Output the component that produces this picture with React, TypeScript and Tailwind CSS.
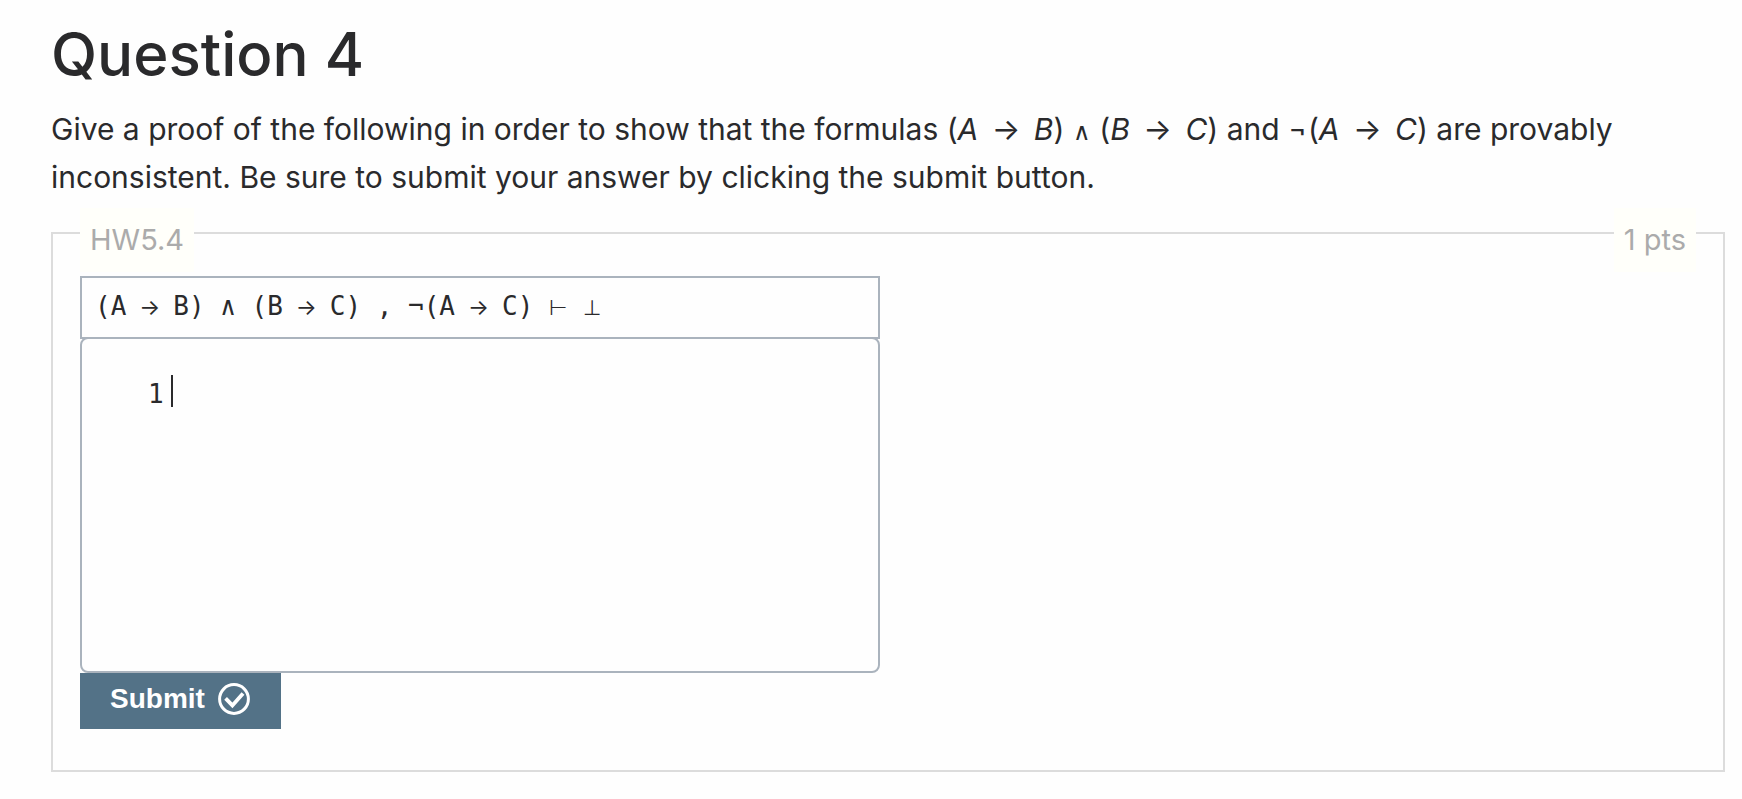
import React from "react";

function CheckCircle() {
  return (
    <svg viewBox="0 0 32 32" className="size-8" fill="none" stroke="currentColor" aria-hidden="true">
      <circle cx="16" cy="16" r="14.4" strokeWidth="3" />
      <path d="M7.6 15.4 L14.4 22.4 L25 10.4" strokeWidth="3.8" />
    </svg>
  );
}

function Arrow() {
  return <span className="px-[5px]">→</span>;
}

function MonoArrow() {
  return (
    <span className="inline-block w-[3ch] text-center leading-none">
      <span className="font-['Inter',sans-serif] text-[22px] leading-none">→</span>
    </span>
  );
}

function Turnstile({ children }: { children: string }) {
  return <span className="font-['DejaVu_Sans',sans-serif] text-[21px] leading-none font-extralight">{children}</span>;
}

export default function App() {
  return (
    <main className="min-h-screen bg-[#fefefe] pt-[18px] pr-[17px] pb-7 pl-[51px] font-['Inter',sans-serif] text-[#2a2a2c]">
      <h1 className="text-[60px] leading-[72px] font-medium">Question 4</h1>
      <p className="mt-[15px] pr-10 text-[30px] leading-[48px]">
        Give a proof of the following in order to show that the formulas (<i>A</i> <Arrow /> <i>B</i>){" "}
        <span className="text-[24px] leading-none font-light">∧</span> (<i>B</i> <Arrow /> <i>C</i>) and ¬(<i>A</i> <Arrow />{" "}
        <i>C</i>) <span>are provably</span>{" "}
        <span>inconsistent. Be sure to submit your answer by clicking the submit button.</span>
      </p>
      <section className="relative mt-[31px] border-2 border-[#dcdcdc] px-[27px] pt-[42px] pb-[41px]">
        <h2 className="absolute -top-[26px] left-[27px] bg-[#fffffa] px-[10px] text-[29px] leading-[64px] text-[#ababab]">
          HW5.4
        </h2>
        <span className="absolute -top-[26px] right-[27px] bg-[#fffffa] px-[10px] text-[29px] leading-[64px] text-[#ababab]">
          1 pts
        </span>
        <form className="max-w-[800px]" onSubmit={(e) => e.preventDefault()}>
          <label
            htmlFor="proof"
            className="block h-[63px] border-2 border-[#aab3bd] px-[13px] font-['DejaVu_Sans_Mono',monospace] text-[26px] leading-[56px] whitespace-pre"
          >
            (A<MonoArrow />B) ∧ (B<MonoArrow />C) , ¬(A<MonoArrow />C) <Turnstile>⊢</Turnstile> <Turnstile>⊥</Turnstile>
          </label>
          <div className="-mt-0.5 flex h-[336px] rounded-lg border-2 border-[#aab3bd] pt-9 pl-[66px] font-['DejaVu_Sans_Mono',monospace] text-[26px] leading-[38px]">
            <span>1</span>
            <textarea
              id="proof"
              autoFocus
              spellCheck={false}
              className="ml-[7px] h-8 flex-1 resize-none border-l-2 border-[#2a2a2c] bg-transparent caret-transparent outline-none"
            />
          </div>
          <button type="submit" className="flex h-14 items-center gap-[13px] bg-[#537287] pr-[31px] pb-[5px] pl-[30px] font-['Liberation_Sans',sans-serif] text-[28px] font-bold text-white">
            Submit
            <CheckCircle />
          </button>
        </form>
      </section>
    </main>
  );
}
